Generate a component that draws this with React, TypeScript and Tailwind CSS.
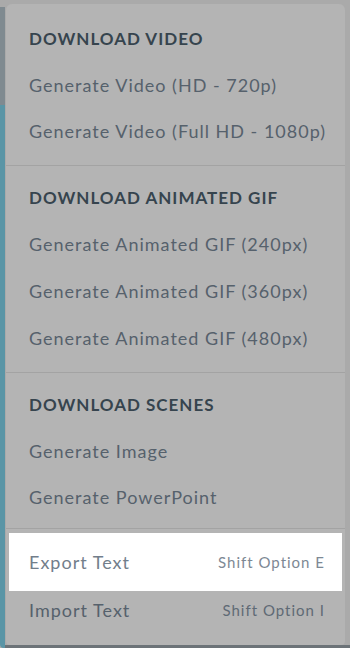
const sections = [
  {
    title: "DOWNLOAD VIDEO",
    items: ["Generate Video (HD - 720p)", "Generate Video (Full HD - 1080p)"],
    pad: "pt-[12px] pb-[11px]",
    row: "h-[46px]",
  },
  {
    title: "DOWNLOAD ANIMATED GIF",
    items: [
      "Generate Animated GIF (240px)",
      "Generate Animated GIF (360px)",
      "Generate Animated GIF (480px)",
    ],
    pad: "pt-[9px] pb-[10px]",
    row: "h-[47px]",
  },
  {
    title: "DOWNLOAD SCENES",
    items: ["Generate Image", "Generate PowerPoint"],
    pad: "pt-[9px] pb-[8px]",
    row: "h-[46px]",
  },
];

export default function App() {
  return (
    <div
      className="w-[350px] h-[648px] bg-[#aaaaaa] flex overflow-hidden"
      style={{ fontFamily: "Lato, 'Open Sans', sans-serif" }}
    >
      {/* page edge behind the menu */}
      <div className="w-[5px] flex flex-col pt-[7px]">
        <div className="h-[98px] bg-[#7f8a90]" />
        <div className="flex-1 bg-[#5a95a6] rounded-bl-[4px]" />
      </div>

      <div className="flex-1 flex flex-col pt-[4px]">
        <div className="flex-1 flex">
          <div className="ml-[1px] w-[339px] rounded-t-[6px] rounded-b-[4px] bg-[#b4b4b4] flex flex-col">
            {sections.map((s) => (
              <div key={s.title} className={"border-b border-[#a3a3a3] " + s.pad}>
                <div className="h-[46px] flex items-center pl-[23px] text-[17px] font-bold tracking-[1px] text-[#36444e]">
                  {s.title}
                </div>
                {s.items.map((it) => (
                  <div
                    key={it}
                    className={
                      "flex items-center pl-[23px] text-[18px] tracking-[1px] text-[#56616c] " + s.row
                    }
                  >
                    {it}
                  </div>
                ))}
              </div>
            ))}
            <div className="pt-[4px]">
              <div className="mx-[3px] h-[58px] bg-white flex items-center justify-between pl-[20px] pr-[17px]">
                <span className="text-[18px] tracking-[1px] text-[#727e8b]">Export Text</span>
                <span className="text-[15px] tracking-[1px] text-[#7d8894]">Shift Option E</span>
              </div>
              <div className="h-[38px] flex items-center justify-between pl-[23px] pr-[20px]">
                <span className="text-[18px] tracking-[1px] text-[#56616c]">Import Text</span>
                <span className="text-[15px] tracking-[1px] text-[#5f6a75]">Shift Option I</span>
              </div>
            </div>
          </div>
        </div>
        <div className="h-[3px] bg-[#6c7378]" />
      </div>
    </div>
  );
}
